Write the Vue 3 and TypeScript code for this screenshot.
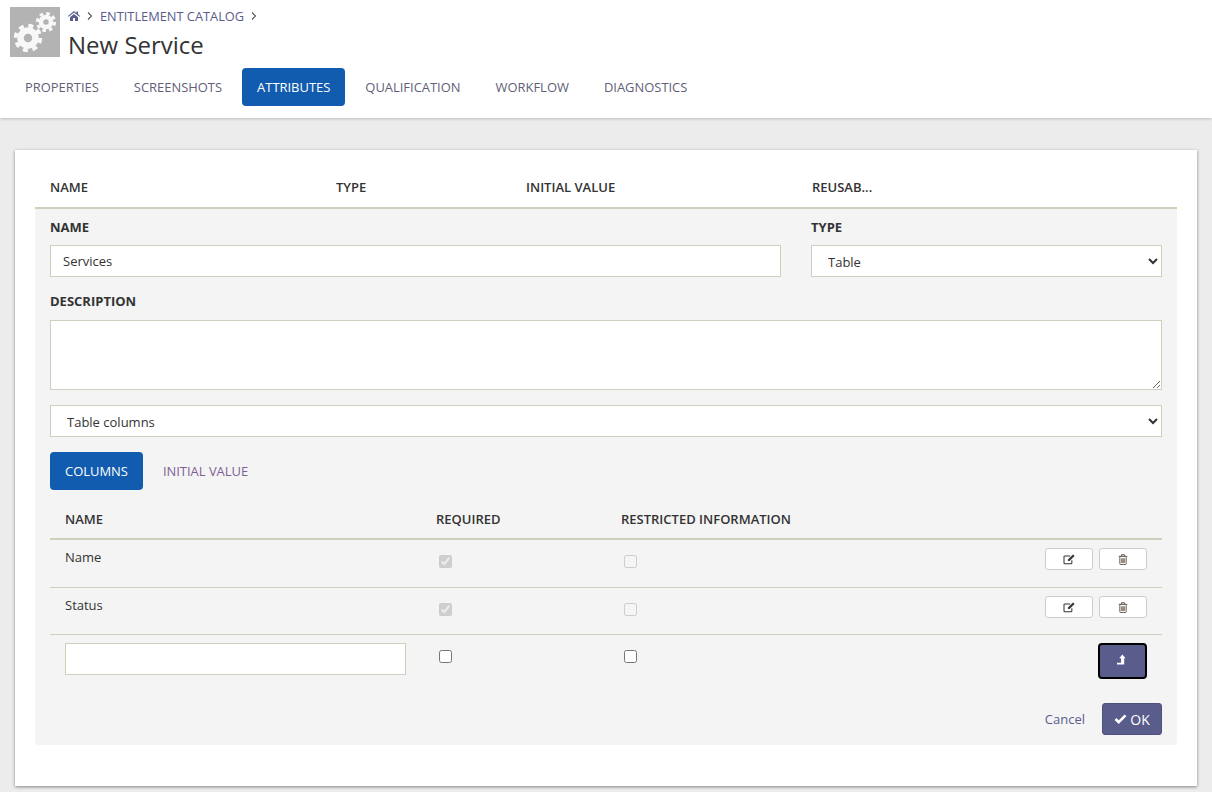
<script setup lang="ts">
const tabs = ['Properties', 'Screenshots', 'Attributes', 'Qualification', 'Workflow', 'Diagnostics']
const headers = ['Name', 'Type', 'Initial value', 'Reusab...']
const columns = [
  { name: 'Name', required: true },
  { name: 'Status', required: true }
]
</script>

<template>
  <div class="page">
    <header class="top">
      <div class="title-row">
        <div class="logo">
          <svg class="gears" viewBox="0 0 50 50" width="50" height="50">
            <g fill="none" stroke="#f8f8f8">
              <circle cx="18" cy="31" r="7.500" stroke-width="6.500" />
              <circle cx="18" cy="31" r="12.300" stroke-width="3.800" stroke-dasharray="5 4.660" />
              <circle cx="36" cy="15" r="5" stroke-width="4.600" />
              <circle cx="36" cy="15" r="8.600" stroke-width="3" stroke-dasharray="3.600 3.150" />
            </g>
          </svg>
        </div>
        <div class="title-text">
          <nav class="crumbs">
            <svg class="home" viewBox="0 0 24 20" width="12" height="10">
              <path d="M12 0 0 10l1.400 1.700L12 3l10.600 8.700L24 10l-4-3.300V1h-3v3.200zM4 12.500V20h6v-6h4v6h6v-7.500L12 5.800z" fill="#5a5c8c" />
            </svg>
            <svg class="chev" viewBox="0 0 6 8" width="6" height="8">
              <path d="M1 .5 4.500 4 1 7.500" fill="none" stroke="#555" stroke-width="1.100" />
            </svg>
            <a class="crumb">ENTITLEMENT CATALOG</a>
            <svg class="chev" viewBox="0 0 6 8" width="6" height="8">
              <path d="M1 .5 4.500 4 1 7.500" fill="none" stroke="#555" stroke-width="1.100" />
            </svg>
          </nav>
          <h1>New Service</h1>
        </div>
      </div>
      <div class="tabs">
        <a v-for="t in tabs" :key="t" class="tab" :class="{ active: t === 'Attributes' }">{{ t }}</a>
      </div>
    </header>

    <main class="card">
      <div class="list-head">
        <span v-for="h in headers" :key="h">{{ h }}</span>
      </div>
      <section class="detail">
        <div class="row-two">
          <div class="field grow">
            <label>Name</label>
            <input class="input" type="text" value="Services" />
          </div>
          <div class="field type">
            <label>Type</label>
            <select class="input select"><option>Table</option></select>
          </div>
        </div>
        <div class="field desc">
          <label>Description</label>
          <textarea class="input area"></textarea>
        </div>
        <select class="input select wide"><option>Table columns</option></select>

        <div class="subtabs">
          <a class="tab active">Columns</a>
          <a class="tab plain">Initial value</a>
        </div>

        <div class="grid grid-head">
          <span>Name</span>
          <span>Required</span>
          <span>Restricted information</span>
          <span></span>
        </div>
        <div v-for="c in columns" :key="c.name" class="grid grid-row">
          <span class="col-name">{{ c.name }}</span>
          <span><input type="checkbox" :checked="c.required" disabled /></span>
          <span><input type="checkbox" disabled /></span>
          <span class="actions">
            <button class="mini">
              <svg viewBox="0 0 16 14" width="13" height="11">
                <path d="M11 8v3.500a1 1 0 0 1-1 1H2a1 1 0 0 1-1-1v-8a1 1 0 0 1 1-1h7" fill="none" stroke="#333" stroke-width="1.300" />
                <path d="M6 7l6.500-6.500 2 2L8 9H6z" fill="#333" />
              </svg>
            </button>
            <button class="mini">
              <svg viewBox="0 0 12 14" width="10" height="11">
                <path d="M2 4v8.500a1 1 0 0 0 1 1h6a1 1 0 0 0 1-1V4M.500 3h11M4 3V1h4v2M4.500 5.500v6M6 5.500v6M7.500 5.500v6" fill="none" stroke="#5a4a3a" stroke-width="1.200" />
              </svg>
            </button>
          </span>
        </div>
        <div class="grid new-row">
          <span><input class="input new-input" type="text" /></span>
          <span><input class="live" type="checkbox" /></span>
          <span><input class="live" type="checkbox" /></span>
          <span class="actions">
            <button class="add">
              <svg viewBox="0 0 10 12" width="9" height="12">
                <path d="M6 0 9.500 4H8V11H0V9H4.500V4H2.500z" fill="#fff" />
              </svg>
            </button>
          </span>
        </div>
        <div class="footer">
          <a class="cancel">Cancel</a>
          <button class="ok">
            <svg viewBox="0 0 14 11" width="13" height="10">
              <path d="M1.500 5.500 5 9l7.500-7.500" fill="none" stroke="#fff" stroke-width="2.800" />
            </svg>
            OK
          </button>
        </div>
      </section>
    </main>
  </div>
</template>

<style>
body {
  margin: 0;
  background: #ececec;
}
</style>

<style scoped>
.page {
  min-height: 792px;
  box-sizing: border-box;
  font-family: "Open Sans", sans-serif;
  font-size: 13px;
  color: #333;
  overflow: hidden;
}

.top {
  height: 118px;
  box-sizing: border-box;
  background: #fff;
  padding: 7px 10px 0;
  box-shadow: 0 1px 3px rgba(0, 0, 0, 0.2);
}

.title-row {
  display: flex;
  gap: 8px;
  height: 61px;
}

.logo {
  width: 50px;
  height: 50px;
  background: #b3b3b3;
  overflow: hidden;
}

.gears {
  display: block;
  filter: blur(0.4px);
}

.crumbs {
  display: flex;
  align-items: center;
  height: 18px;
  font-size: 12.800px;
  color: #5a5c8c;
}

.chev {
  margin: 0 7px;
}

h1 {
  margin: 3px 0 0;
  font-size: 24px;
  line-height: 33px;
  font-weight: 400;
  color: #333;
}

.tabs,
.subtabs {
  display: flex;
  gap: 5px;
}

.tab {
  height: 38px;
  padding: 0 15px;
  display: flex;
  align-items: center;
  border-radius: 4px;
  text-transform: uppercase;
  font-size: 12.950px;
  color: #5f5f78;
}

.tab.active {
  background: #125cb0;
  color: #fff;
}

.tab.plain {
  color: #7d5f93;
}

.card {
  margin: 32px 15px 0;
  height: 636px;
  box-sizing: border-box;
  padding: 20px 20px 0;
  background: #fff;
  box-shadow: 0 1px 3px rgba(0, 0, 0, 0.45);
}

.list-head {
  display: grid;
  grid-template-columns: 286px 190px 286px 1fr;
  padding: 0 0 4px 15px;
  height: 33px;
  align-items: center;
  border-bottom: 2px solid #cfcfbd;
  font-weight: 600;
  font-size: 13px;
  text-transform: uppercase;
}

.detail {
  height: 536px;
  box-sizing: border-box;
  background: #f4f4f4;
  padding: 9px 15px 0;
  border-radius: 0 0 4px 4px;
}

.row-two {
  display: flex;
  gap: 30px;
}

.grow {
  flex: 1;
}

.type {
  width: 351px;
}

label {
  display: block;
  height: 27px;
  line-height: 18px;
  font-weight: 700;
  font-size: 13px;
  text-transform: uppercase;
}

.input {
  display: block;
  box-sizing: border-box;
  width: 100%;
  height: 32px;
  padding: 0 12px;
  border: 1px solid #cfcfbd;
  background: #fff;
  font-family: inherit;
  font-size: 13px;
  color: #333;
  outline: none;
}

.select {
  padding: 1px 0 0 12px;
}

.desc {
  margin-top: 15px;
}

.desc label {
  height: 28px;
}

.area {
  height: 70px;
  resize: vertical;
}

.wide {
  margin-top: 15px;
}

.subtabs {
  margin-top: 15px;
}

.grid {
  display: grid;
  grid-template-columns: 371px 185px 1fr 240px;
  padding: 0 15px;
}

.grid-head {
  margin-top: 12px;
  height: 34px;
  padding-bottom: 2px;
  align-items: center;
  border-bottom: 2px solid #cfcfbd;
  font-weight: 600;
  font-size: 13px;
  text-transform: uppercase;
}

.grid-row {
  height: 47px;
  border-bottom: 1px solid #cfcfbd;
}

.grid-row + .grid-row {
  height: 46px;
}

.col-name {
  padding-top: 8px;
  line-height: 18px;
}

input[type='checkbox'] {
  width: 13px;
  height: 13px;
  margin: 15px 0 0 3px;
}

.new-row {
  padding-top: 8px;
}

.new-input {
  width: 341px;
}

.new-row input[type='checkbox'] {
  margin-top: 7px;
}

.actions {
  display: flex;
  justify-content: flex-end;
  gap: 6px;
}

.mini {
  width: 48px;
  height: 22px;
  margin-top: 8px;
  padding: 0;
  display: flex;
  align-items: center;
  justify-content: center;
  background: #fff;
  border: 1px solid #ccc;
  border-radius: 3px;
}

.add {
  width: 49px;
  height: 36px;
  padding: 0 2px 2px 0;
  display: flex;
  align-items: center;
  justify-content: center;
  background: #5a5c8c;
  border: 2px solid #000;
  border-radius: 4px;
}

.footer {
  display: flex;
  justify-content: flex-end;
  align-items: center;
  gap: 17px;
  margin-top: 24px;
}

.cancel {
  color: #5a5c8c;
}

.ok {
  width: 60px;
  height: 32px;
  padding: 0;
  display: flex;
  align-items: center;
  justify-content: center;
  gap: 3px;
  background: #5a5c8c;
  border: 1px solid #4e5080;
  border-radius: 3px;
  color: #fff;
  font-family: inherit;
  font-size: 14px;
}
</style>
